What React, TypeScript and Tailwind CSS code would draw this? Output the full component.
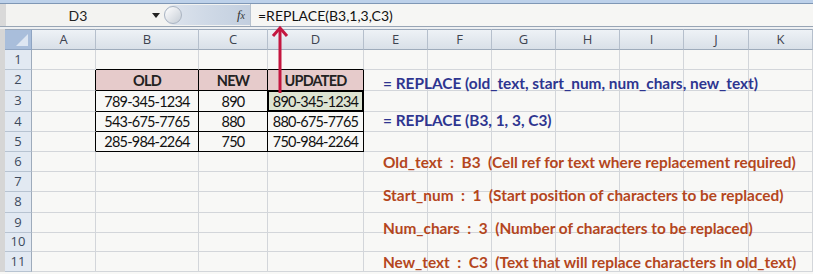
import React from "react";

const COLS = ["A", "B", "C", "D", "E", "F", "G", "H", "I", "J", "K"];
const ROW_H = [20, 21, 21, 20, 20, 20, 20, 21, 20, 19, 20];
const GRID = "grid grid-cols-[5px_27px_64px_103px_69px_96px_64px_64px_64px_64px_64px_65px_64px] grid-rows-[100%] overflow-hidden";

const table: Record<string, string> = {
  "2B": "OLD",
  "2C": "NEW",
  "2D": "UPDATED",
  "3B": "789-345-1234",
  "3C": "890",
  "3D": "890-345-1234",
  "4B": "543-675-7765",
  "4C": "880",
  "4D": "880-675-7765",
  "5B": "285-984-2264",
  "5C": "750",
  "5D": "750-984-2264",
};

function inTable(r: number, c: string) {
  return r >= 2 && r <= 5 && (c === "B" || c === "C" || c === "D");
}

function Cell({ r, c }: { r: number; c: string }) {
  const t = inTable(r, c);
  const rightBlack = t || (c === "A" && r >= 2 && r <= 5);
  const bottomBlack = t || (r === 1 && (c === "B" || c === "C" || c === "D"));
  const header = r === 2 && t;
  const active = r === 3 && c === "D";
  const text = table[`${r}${c}`];
  return (
    <div
      className={[
        "relative flex items-center justify-center pt-[1px] border-r border-b whitespace-nowrap text-[14.5px] leading-[18px] tracking-[-0.8px] text-[#111]",
        rightBlack ? "border-r-black" : "border-r-[#d3d6da]",
        bottomBlack ? "border-b-black" : "border-b-[#d3d6da]",
        header ? "bg-[#e6cbcb] font-bold text-[#222] tracking-[-0.4px]" : active ? "bg-[#dde4d2]" : "bg-[#f8f8f6]",
      ].join(" ")}
    >
      {text}
      {active && <div className="absolute -left-px -top-px -right-px -bottom-px border-2 border-black" />}
    </div>
  );
}

export default function App() {
  return (
    <div
      className="relative w-[813px] h-[274px] overflow-hidden bg-[#f8f8f6]"
      style={{ fontFamily: "Lato, 'Open Sans', sans-serif" }}
    >
      {/* ribbon edge */}
      <div className="h-[4px] bg-[#bdd1ea] border-b border-b-[#7f97b5]" />
      {/* formula bar */}
      <div className="flex h-[23px] bg-[#f3f3f1] border-b border-b-[#98a5b5]">
        <div className="w-[6px] bg-[#d9d9d9]" />
        <div className="w-[144px] flex items-center justify-center text-[14px] text-[#222]">D3</div>
        <div className="w-[12px] flex items-center justify-center">
          <svg width="8" height="5" viewBox="0 0 8 5"><path d="M0 0h8L4 5z" fill="#222" /></svg>
        </div>
        <div className="ml-[2px] my-[1px] w-[86px] flex items-center rounded-l-full bg-gradient-to-r from-[#dfe5ee] via-[#cfd9e6] to-[#c3cfdf]">
          <div className="w-[18px] h-[18px] rounded-full bg-gradient-to-br from-[#ffffff] to-[#c6cdd6] border border-[#aab4c2]" />
          <div className="ml-auto mr-[5px] text-[13px] italic text-[#333]" style={{ fontFamily: "'Liberation Serif', serif" }}>
            f<span className="text-[10px]">x</span>
          </div>
        </div>
        <div className="flex-1 flex items-center pl-[7px] border-l border-l-[#b8c2ce] bg-[#f6f6f4] text-[14px] text-[#111]">
          =REPLACE(B3,1,3,C3)
        </div>
      </div>
      <div className="h-[2px] bg-[#eef0f2]" />
      {/* column header */}
      <div className={`${GRID} h-[21px]`}>
        <div className="bg-[#d6d6d6]" />
        <div className="relative bg-[#a9bedb] border-r border-b border-[#8ea4c2] border-t border-t-[#9aa8ba]">
          <svg className="absolute right-[3px] bottom-[3px]" width="12" height="12" viewBox="0 0 12 12">
            <path d="M12 0V12H0z" fill="#dde6f2" />
          </svg>
        </div>
        {COLS.map((c) => (
          <div
            key={c}
            className="flex items-center justify-center border-r border-r-[#b5bfcc] border-b border-b-[#9eabbb] border-t border-t-[#9aa8ba] bg-gradient-to-b from-[#eef2f6] to-[#d9e0e8] text-[13px] text-[#3d4350]"
            style={{ fontFamily: "'Open Sans', sans-serif" }}
          >
            {c}
          </div>
        ))}
      </div>
      {/* rows */}
      {ROW_H.map((h, i) => {
        const r = i + 1;
        return (
          <div key={r} className={GRID} style={{ height: h }}>
            <div className="bg-[#d6d6d6]" />
            <div
              className="flex items-center justify-center bg-[#e2e9f2] border-r border-r-[#9eabbb] border-b border-b-[#b7c3d1] text-[13px] text-[#3d4a5c]"
              style={{ fontFamily: "'Open Sans', sans-serif" }}
            >
              {r}
            </div>
            {COLS.map((c) => (
              <Cell key={c} r={r} c={c} />
            ))}
          </div>
        );
      })}

      {/* red arrow */}
      <svg className="absolute left-[271px] top-[24px]" width="18" height="70" viewBox="0 0 18 70">
        <path d="M9 4V69" stroke="#c4163f" strokeWidth="3" />
        <path d="M2 12L9 4L16 12" stroke="#c4163f" strokeWidth="3" fill="none" strokeLinejoin="miter" />
      </svg>

      {/* annotation text box */}
      <div className="absolute left-[383px] top-[72px] flex flex-col font-bold text-[15.4px] leading-[22px] whitespace-pre">
        <div className="text-[#2e3590]">= REPLACE (old_text, start_num, num_chars, new_text)</div>
        <div className="mt-[15px] text-[#2e3590]">= REPLACE (B3, 1, 3, C3)</div>
        <div className="mt-[20px] text-[#b4461d]">Old_text  :  B3  (Cell ref for text where replacement required)</div>
        <div className="mt-[11px] text-[#b4461d]">Start_num  :  1  (Start position of characters to be replaced)</div>
        <div className="mt-[11px] text-[#b4461d]">Num_chars  :  3  (Number of characters to be replaced)</div>
        <div className="mt-[12px] text-[#b4461d]">New_text  :  C3  (Text that will replace characters in old_text)</div>
      </div>
    </div>
  );
}
